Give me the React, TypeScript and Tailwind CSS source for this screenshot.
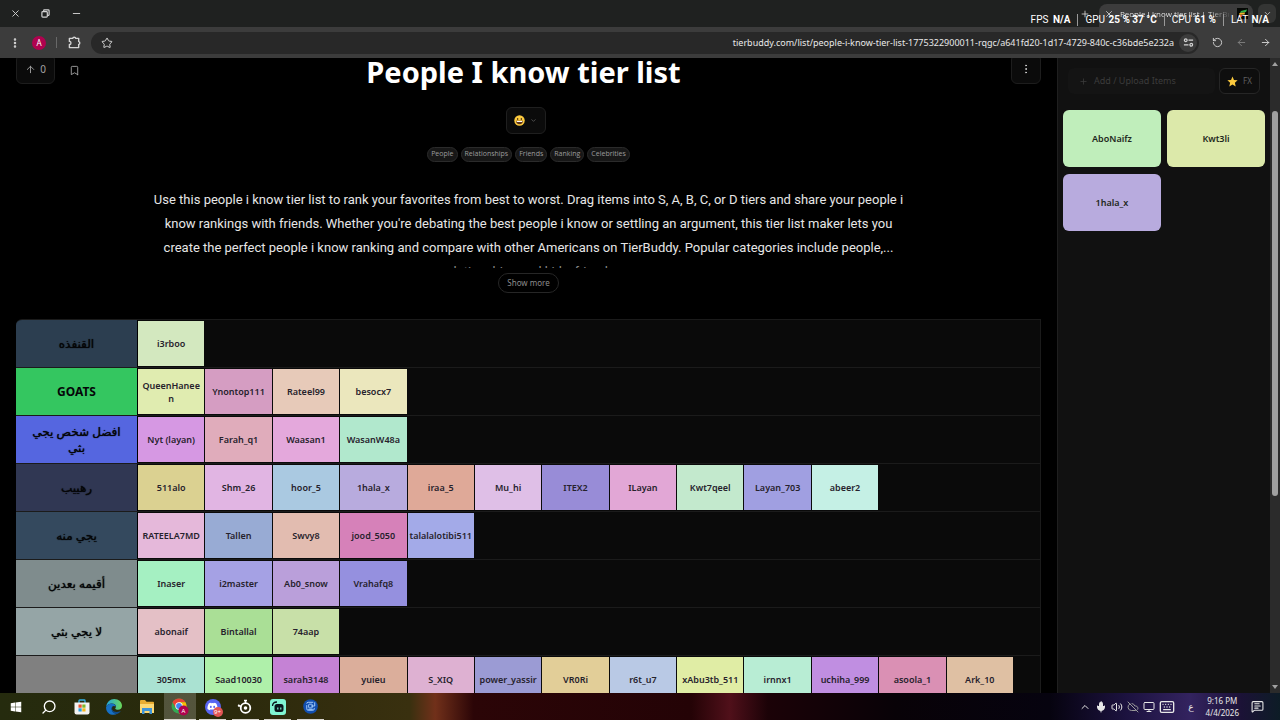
import React from "react";
import {
  ArrowLeft,
  ArrowRight,
  ArrowUp,
  Bookmark,
  ChevronDown,
  ChevronUp,
  CloudOff,
  EllipsisVertical,
  Keyboard,
  MessageSquareText,
  Mic,
  Minus,
  Monitor,
  Plus,
  RotateCcw,
  Search,
  Star,
  Volume2,
  X,
} from "lucide-react";
import { FaDiscord, FaWindows } from "react-icons/fa";

type Item = [name: string, color: string];
type Tier = { label: string; color: string; items: Item[] };

const tiers: Tier[] = [
  { label: "القنفذه", color: "bg-[#2c3e50]", items: [["i3rboo", "bg-[#d3e8bf]"]] },
  {
    label: "GOATS",
    color: "bg-[#34c660]",
    items: [
      ["QueenHanee\nn", "bg-[#e0ecb0]"],
      ["Ynontop111", "bg-[#d59dc2]"],
      ["Rateel99", "bg-[#e7cab9]"],
      ["besocx7", "bg-[#ebe7bd]"],
    ],
  },
  {
    label: "افضل شخص يجي بثي",
    color: "bg-[#5566e0]",
    items: [
      ["Nyt (layan)", "bg-[#d698e3]"],
      ["Farah_q1", "bg-[#e0acbb]"],
      ["Waasan1", "bg-[#e4a8dc]"],
      ["WasanW48a", "bg-[#b1e8cd]"],
    ],
  },
  {
    label: "رهييب",
    color: "bg-[#303753]",
    items: [
      ["511alo", "bg-[#dbd191]"],
      ["Shm_26", "bg-[#e1b5e3]"],
      ["hoor_5", "bg-[#aac9e1]"],
      ["1hala_x", "bg-[#b8abde]"],
      ["iraa_5", "bg-[#dfa998]"],
      ["Mu_hi", "bg-[#dfbfe7]"],
      ["ITEX2", "bg-[#988cd7]"],
      ["ILayan", "bg-[#e2a7d6]"],
      ["Kwt7qeel", "bg-[#c3e9cd]"],
      ["Layan_703", "bg-[#a09fe1]"],
      ["abeer2", "bg-[#c5f0e5]"],
    ],
  },
  {
    label: "يجي منه",
    color: "bg-[#34495e]",
    items: [
      ["RATEELA7MD", "bg-[#e5b8da]"],
      ["Tallen", "bg-[#98abd4]"],
      ["Swvy8", "bg-[#e2bcb0]"],
      ["jood_5050", "bg-[#d681b9]"],
      ["talalalotibi511", "bg-[#a3aae8]"],
    ],
  },
  {
    label: "أقيمه بعدين",
    color: "bg-[#7f8c8d]",
    items: [
      ["Inaser", "bg-[#a5f0c2]"],
      ["i2master", "bg-[#a5a1e4]"],
      ["Ab0_snow", "bg-[#ba9fda]"],
      ["Vrahafq8", "bg-[#9590df]"],
    ],
  },
  {
    label: "لا يجي بثي",
    color: "bg-[#95a5a6]",
    items: [
      ["abonaif", "bg-[#e4c0c6]"],
      ["Bintallal", "bg-[#aadf96]"],
      ["74aap", "bg-[#c8e0a8]"],
    ],
  },
  {
    label: "",
    color: "bg-[#808080]",
    items: [
      ["305mx", "bg-[#aae2d2]"],
      ["Saad10030", "bg-[#aff0aa]"],
      ["sarah3148", "bg-[#c582d5]"],
      ["yuieu", "bg-[#dbae9b]"],
      ["S_XIQ", "bg-[#deb1d2]"],
      ["power_yassir", "bg-[#9b9bd4]"],
      ["VR0Ri", "bg-[#e2ce98]"],
      ["r6t_u7", "bg-[#b9c9e5]"],
      ["xAbu3tb_511", "bg-[#e0eda5]"],
      ["irnnx1", "bg-[#b8edd4]"],
      ["uchiha_999", "bg-[#c08ee1]"],
      ["asoola_1", "bg-[#da90b4]"],
      ["Ark_10", "bg-[#dfc0a3]"],
    ],
  },
];

const tags = ["People", "Relationships", "Friends", "Ranking", "Celebrities"];

const pool: Item[] = [
  ["AboNaifz", "bg-[#c0eebb]"],
  ["Kwt3li", "bg-[#dce9aa]"],
  ["1hala_x", "bg-[#b8abde]"],
];

function RestoreIcon() {
  return (
    <svg viewBox="0 0 10 10" className="size-[9px]" fill="none" stroke="currentColor" strokeWidth="1.3">
      <rect x="1" y="3" width="6" height="6" rx="1" />
      <path d="M3 3V1.6q0-.6.6-.6H8q1 0 1 1v4.400q0 .6-.6.6H7" />
    </svg>
  );
}

function PuzzleIcon() {
  return (
    <svg viewBox="0 0 14 14" className="size-[13px]" fill="none" stroke="currentColor" strokeWidth="1.5" strokeLinejoin="round">
      <path d="M1.500 2.500H5.200a1.500 1.200 0 0 1 3 0H11.500V6a1.200 1.500 0 0 1 0 3v3.500H1.500V9.200a1.700 1.700 0 0 0 0-3.400z" />
    </svg>
  );
}

function TuneIcon() {
  return (
    <svg viewBox="0 0 12 12" className="size-[11px]" fill="none" stroke="currentColor" strokeWidth="1.3">
      <circle cx="3" cy="3.500" r="1.500" />
      <path d="M6 3.500h5M1 8.500h5" />
      <circle cx="9" cy="8.500" r="1.500" />
    </svg>
  );
}

function TitleBar() {
  return (
    <div className="relative flex h-[27px] shrink-0 items-center justify-between bg-[#1f2120] text-[#d5d5d5]">
      <div className="flex">
        <button aria-label="Close window" className="flex w-[30px] justify-center">
          <X className="size-[11px]" />
        </button>
        <button aria-label="Restore window" className="flex w-[30px] items-center justify-center">
          <RestoreIcon />
        </button>
        <button aria-label="Minimize window" className="flex w-8 justify-center">
          <Minus className="size-[11px]" />
        </button>
      </div>
      <div className="flex h-full items-stretch pt-1 pr-1">
        <button aria-label="New tab" className="flex w-7 items-center justify-center pb-1">
          <Plus className="size-[10px]" />
        </button>
        <div className="flex w-[154px] items-center rounded-t-lg bg-[#3c3c3c] px-[5px] pb-1">
          <button aria-label="Close tab" className="mr-[6px]">
            <X className="size-[10px]" />
          </button>
          <span className="min-w-0 flex-1 overflow-hidden bg-linear-to-r from-[#f0f0f0] from-80% to-[#555] bg-clip-text font-['Open_Sans',sans-serif] text-[8px] whitespace-nowrap text-transparent">
            People I know tier list | TierBuddy
          </span>
          <svg viewBox="0 0 11 11" className="ml-2 size-[11px]">
            <path fill="#050805" d="M0 0h11v11H0z" />
            <path fill="#31b24a" d="M4 3 10 1.500 9 4 3 5z" />
            <path fill="#f0b429" d="M2.500 5 8 4.500 7.500 6.500 2 6.800z" />
            <path fill="#e5533c" d="M2 7h3.500L5 8.800H1.500z" />
          </svg>
        </div>
        <button aria-label="Search tabs" className="mb-1 ml-[5px] flex w-[18px] items-center justify-center rounded-md bg-[#343534]">
          <ChevronDown className="size-[9px]" />
        </button>
      </div>
      <div className="absolute top-[13px] right-[11px] flex items-center gap-[7px] font-['Roboto',sans-serif] text-[10px] leading-[14px] whitespace-nowrap text-white">
        <span>FPS <b className="ml-[2px]">N/A</b></span>
        <span className="h-3 w-px bg-[#999]" />
        <span>GPU <b className="ml-px">25 % 37 °C</b></span>
        <span className="h-3 w-px bg-[#999]" />
        <span>CPU <b className="ml-px">61 %</b></span>
        <span className="h-3 w-px bg-[#999]" />
        <span>LAT <b className="ml-px">N/A</b></span>
      </div>
    </div>
  );
}

function AddressBar() {
  return (
    <div className="flex h-[31px] shrink-0 items-center bg-[#3c3c3c] text-[#d5d5d5]">
      <button aria-label="Menu" className="flex w-[30px] justify-center">
        <EllipsisVertical className="size-3" strokeWidth={3} />
      </button>
      <button aria-label="Profile" className="ml-[2px] flex size-[14px] items-center justify-center rounded-full bg-[#b0024f] text-[8px] text-white">
        A
      </button>
      <span className="ml-[10px] h-[11px] w-px bg-[#686868]" />
      <button aria-label="Extensions" className="ml-[10px] flex w-[15px] justify-center">
        <PuzzleIcon />
      </button>
      <div className="ml-[9px] flex h-[22px] flex-1 items-center rounded-full bg-[#282828] pr-[2px] pl-[10px]">
        <button aria-label="Bookmark this tab">
          <Star className="size-3" />
        </button>
        <input
          aria-label="Address"
          readOnly
          className="min-w-0 flex-1 bg-transparent pr-[5px] text-right text-[9px] text-[#e8e8e8] outline-none"
          value="tierbuddy.com/list/people-i-know-tier-list-1775322900011-rqgc/a641fd20-1d17-4729-840c-c36bde5e232a"
        />
        <button aria-label="Site information" className="flex size-[18px] items-center justify-center rounded-full bg-[#3c3c3c]">
          <TuneIcon />
        </button>
      </div>
      <div className="flex pr-[3px] pl-[6px]">
        <button aria-label="Reload" className="flex w-6 justify-center">
          <RotateCcw className="size-[11px]" />
        </button>
        <button aria-label="Forward" className="flex w-6 justify-center text-[#808080]">
          <ArrowLeft className="size-[11px]" />
        </button>
        <button aria-label="Back" className="flex w-6 justify-center">
          <ArrowRight className="size-[11px]" />
        </button>
      </div>
    </div>
  );
}

function Smiley() {
  return (
    <svg viewBox="0 0 12 12" className="size-[11px]">
      <circle cx="6" cy="6" r="5.700" fill="#fcca3e" />
      <ellipse cx="4" cy="4.300" rx=".8" ry="1.100" fill="#47301b" />
      <ellipse cx="8" cy="4.300" rx=".8" ry="1.100" fill="#47301b" />
      <path d="M2.200 6.300h7.600a3.800 3.800 0 0 1-7.600 0z" fill="#5a321a" />
      <path d="M2.800 6.500h6.400l-.3 1.100H3.100z" fill="#fff" />
    </svg>
  );
}

function TierRow({ tier }: { tier: Tier }) {
  const latin = tier.label === "GOATS";
  return (
    <div className="flex h-12 border-b border-[#1b1b1b]">
      <div
        dir="auto"
        className={`flex w-[121px] shrink-0 items-center justify-center px-2 text-center text-[12px] leading-4 text-[#050608] ${latin ? "font-bold" : "font-normal text-shadow-[0_0_1px_#000]"} ${tier.color}`}
      >
        {tier.label}
      </div>
      <div className="min-w-0 flex-1 border-l border-black py-px">
        <div className="grid h-[45px] w-[875px] grid-cols-[repeat(13,minmax(0,1fr))] gap-px">
          {tier.items.map(([name, color]) => (
            <div
              key={name}
              className={`flex items-center justify-center text-center text-[9px] leading-[13px] font-semibold whitespace-pre text-[#26222c] ${color}`}
            >
              {name}
            </div>
          ))}
        </div>
      </div>
    </div>
  );
}

function Main() {
  return (
    <main className="min-w-0 flex-1 overflow-hidden bg-black px-4">
      <div className="-mt-1 grid grid-cols-[1fr_auto_1fr]">
        <div className="flex items-start gap-[14px] text-[#a3a3a3]">
          <button aria-label="Upvote" className="flex h-[30px] w-[39px] items-center justify-center gap-1 rounded-md border border-[#1d1d1d] bg-[#0b0b0b] text-[10px]">
            <ArrowUp className="size-[11px]" />
            <span>0</span>
          </button>
          <button aria-label="Save" className="flex h-8 items-center">
            <Bookmark className="size-[11px]" />
          </button>
        </div>
        <h1 className="pr-[10px] text-[29px] leading-9 font-bold text-white">People I know tier list</h1>
        <button aria-label="More" className="flex h-[30px] w-[30px] items-center justify-center justify-self-end rounded-md border border-[#1d1d1d] bg-[#0b0b0b] text-[#d0d0d0]">
          <EllipsisVertical className="size-3" />
        </button>
      </div>
      <div className="flex flex-col items-center">
        <button aria-label="React" className="mt-[17px] mr-[6px] flex h-[27px] w-10 items-center justify-center gap-[5px] rounded-md border border-[#1f1f1f] bg-[#0b0b0b] text-[#777]">
          <Smiley />
          <ChevronDown className="size-[7px]" />
        </button>
        <div className="mt-[13px] flex gap-[3px]">
          {tags.map((t) => (
            <a key={t} href="#" className="flex h-[15px] items-center rounded-full border border-[#2b2b2b] bg-[#171717] px-[3px] font-['Open_Sans',sans-serif] text-[7px] text-[#9c9c9c]">
              {t}
            </a>
          ))}
        </div>
        <p className="mt-[26px] h-20 overflow-hidden text-center font-['Roboto',sans-serif] text-[13px] leading-6 text-[#e6e6e6]">
          <span className="block">Use this people i know tier list to rank your favorites from best to worst. Drag items into S, A, B, C, or D tiers and share your people i</span>
          <span className="block">know rankings with friends. Whether you're debating the best people i know or settling an argument, this tier list maker lets you</span>
          <span className="block">create the perfect people i know ranking and compare with other Americans on TierBuddy. Popular categories include people,...</span>
          <span className="block text-[#8c8c8c]">relationships and kids, friends</span>
        </p>
        <button className="mt-[5px] h-5 rounded-full border border-[#262626] px-2 text-[8px] text-[#8c8c8c]">Show more</button>
      </div>
      <div className="mt-[26px] overflow-hidden rounded-tl-md border-y border-r border-[#1b1b1b] bg-[#0a0a0a]">
        {tiers.map((t, i) => (
          <TierRow key={i} tier={t} />
        ))}
      </div>
    </main>
  );
}

function Sidebar() {
  return (
    <aside className="w-[213px] shrink-0 border-l border-[#1f1f1f] bg-[#111111] px-[5px] pt-[10px]">
      <div className="flex gap-1 px-[5px]">
        <button className="flex h-[26px] flex-1 items-center gap-[6px] rounded-md bg-[#141414] px-[11px] text-[9px] text-[#3c3c3c]">
          <Plus className="size-[9px]" />
          Add / Upload Items
        </button>
        <button className="flex h-[26px] w-[41px] items-center justify-center gap-[5px] rounded-md border border-[#262626] bg-[#0e0e0e] text-[8px] text-[#606060]">
          <svg viewBox="0 0 12 12" className="size-[11px]">
            <path fill="#fcca3e" d="m6 .6 1.600 3.700 4 .4-3 2.700.9 4L6 9.300l-3.500 2.100.9-4-3-2.700 4-.4z" />
          </svg>
          FX
        </button>
      </div>
      <div className="mt-4 grid grid-cols-2 gap-x-[6px] gap-y-[7px]">
        {pool.map(([name, color]) => (
          <div key={name} className={`flex h-[57px] items-center justify-center rounded-md text-[9px] font-semibold text-[#1e2820] ${color}`}>
            {name}
          </div>
        ))}
      </div>
    </aside>
  );
}

function Scrollbar() {
  return (
    <div className="flex w-[10px] shrink-0 flex-col items-center bg-[#2b2b2b] py-1">
      <svg viewBox="0 0 6 4" className="h-1 w-[6px]">
        <path fill="#a0a0a0" d="M3 0l3 4H0z" />
      </svg>
      <div className="flex w-full flex-1 flex-col items-center pt-[45px]">
        <div className="h-[67%] w-[6px] rounded-full bg-[#9f9f9f]" />
      </div>
      <svg viewBox="0 0 6 4" className="h-1 w-[6px]">
        <path fill="#a0a0a0" d="M3 4L0 0h6z" />
      </svg>
    </div>
  );
}

function StoreIcon() {
  return (
    <svg viewBox="0 0 16 16" className="size-4">
      <path d="M5 4V1.700q0-.7.700-.7h4.600q.7 0 .7.700V4" fill="none" stroke="#35b3e8" strokeWidth="1.300" />
      <path d="M.5 3.500h15v10q0 2-2 2h-11q-2 0-2-2z" fill="#f2f2f2" />
      <path fill="#e8512f" d="M4.500 5.500h3.200v3.200H4.500z" />
      <path fill="#7db928" d="M8.300 5.500h3.200v3.200H8.300z" />
      <path fill="#2a9fe0" d="M4.500 9.300h3.200v3.200H4.500z" />
      <path fill="#f6b71c" d="M8.300 9.300h3.200v3.200H8.300z" />
    </svg>
  );
}

function EdgeIcon() {
  return (
    <svg viewBox="0 0 16 16" className="size-4">
      <defs>
        <linearGradient id="edge-top" x1="0" x2="1">
          <stop stopColor="#21a5df" />
          <stop offset="1" stopColor="#6bd858" />
        </linearGradient>
      </defs>
      <path fill="url(#edge-top)" d="M.2 7.500C.8 3 4.200 0 8.200 0 12.700 0 16 3.200 16 6.800c0 2.400-1.700 4-4 4-1.700 0-2.800-.7-2.800-1.300 0-.4.8-.8.8-2 0-1.700-1.800-3-4.200-3C3.400 4.500 1.300 5.700.2 7.500z" />
      <path fill="#1670c5" d="M.1 8C.9 5.800 3.200 4.600 5.500 4.600c2.600 0 4.400 1.400 4.400 2.800C6.500 5.700 5 8.500 5.800 10.900c.8 2.600 3.300 4 5.600 3.800C7 17.500-.4 15 .1 8z" />
      <path fill="#104e91" d="M6.800 7.500c-2.300 3.700 1.300 7.200 7.900 4.600-1 1.800-2.500 2.600-3.500 2.800-4 .3-7.400-3.900-4.400-7.400z" />
    </svg>
  );
}

function FolderIcon() {
  return (
    <svg viewBox="0 0 16 14" className="h-[14px] w-4">
      <path fill="#e8ad32" d="M1 1q0-1 1-1h4l1.500 1.700H14q1 0 1 1V13H1z" />
      <path fill="#fcd873" d="M1 4h14v9H1z" />
      <path fill="#3f94d7" d="M3 8h10v6h-2.500v-3h-5v3H3z" />
    </svg>
  );
}

function ChromeIcon() {
  return (
    <svg viewBox="0 0 18 18" className="size-[18px]">
      <circle cx="8" cy="8" r="7.500" fill="#35a853" />
      <path fill="#ea4335" d="M1.500 4.300a7.500 7.500 0 0 1 13 0H8L4.800 9.900z" />
      <path fill="#fbbc05" d="M14.500 4.300A7.500 7.500 0 0 1 7.800 15.500L11.200 9.900 8 4.300z" />
      <circle cx="8" cy="8" r="3.700" fill="#fff" />
      <circle cx="8" cy="8" r="2.900" fill="#4285f4" />
      <circle cx="12.500" cy="12.500" r="5" fill="#b0024f" />
      <text x="12.500" y="14.600" textAnchor="middle" fontSize="6" fill="#fff">A</text>
    </svg>
  );
}

function DiscordIcon() {
  return (
    <span className="relative flex size-4 items-center justify-center rounded-full bg-[#5865f2] text-white">
      <FaDiscord className="size-[11px]" />
      <span className="absolute -right-[2px] -bottom-[2px] flex size-[10px] items-center justify-center rounded-full bg-[#e25555] text-[6px] leading-none">9+</span>
    </span>
  );
}

function GearIcon() {
  return (
    <svg viewBox="0 0 16 16" className="size-4" fill="none" stroke="#fff">
      <circle cx="8.500" cy="9" r="4.800" strokeWidth="1.800" />
      <circle cx="8.500" cy="9" r="1.800" fill="#fff" stroke="none" />
      <path strokeWidth="1.600" d="M1 6.500 4.500 7.500M8.500 4V1.500M7 1.500h3" />
      <circle cx="1.800" cy="6.500" r="1" fill="#fff" stroke="none" />
    </svg>
  );
}

function StreamIcon() {
  return (
    <svg viewBox="0 0 16 16" className="size-4">
      <rect width="16" height="16" rx="3" fill="#80f5d2" />
      <rect x="4.500" y="5" width="9" height="8" rx="2.500" fill="#09161d" />
      <path d="M2.500 7q0-4 4.500-4" fill="none" stroke="#09161d" strokeWidth="1.300" />
      <path d="M7.800 8.500v2M10.800 8.500v2" stroke="#80f5d2" strokeWidth="1.200" />
    </svg>
  );
}

function BlueIcon() {
  return (
    <svg viewBox="0 0 16 16" className="size-[15px]" fill="none" stroke="#a9d1ff" strokeWidth="1">
      <circle cx="8" cy="8" r="7.800" fill="#124fb0" stroke="none" />
      <path d="M4 5q0-1.500 1.500-1.500h5.500M4 6.500v4q0 1.500 1.500 1.500h5q1.500 0 1.500-1.500V9.500M12.500 3.500v4h-4" />
      <rect x="6" y="5.500" width="4" height="4" rx="1" />
      <path d="M5.500 11h5" />
    </svg>
  );
}

const apps: { name: string; icon: React.ReactNode; state: "idle" | "open" | "active" }[] = [
  { name: "Start", icon: <FaWindows className="size-3 text-white" />, state: "idle" },
  { name: "Search", icon: <Search className="size-4 -scale-x-100 text-white" />, state: "idle" },
  { name: "Store", icon: <StoreIcon />, state: "idle" },
  { name: "Edge", icon: <EdgeIcon />, state: "idle" },
  { name: "Files", icon: <FolderIcon />, state: "idle" },
  { name: "Chrome", icon: <ChromeIcon />, state: "active" },
  { name: "Discord", icon: <DiscordIcon />, state: "open" },
  { name: "Engine", icon: <GearIcon />, state: "open" },
  { name: "Stream", icon: <StreamIcon />, state: "open" },
  { name: "Capture", icon: <BlueIcon />, state: "open" },
];

function Taskbar() {
  return (
    <div className="flex h-[27px] shrink-0 items-stretch justify-between bg-[linear-gradient(90deg,#252b0e_0%,#2b2a0c_18%,#332d0e_26%,#39300f_32%,#71301a_34%,#2b0507_37%,#240306_54%,#50101a_57%,#1b0207_60%,#080207_70%,#06030f_82%,#1c123f_88%,#33235f_93%,#1b1236_97%,#0d1c26_100%)]">
      <div className="grid w-[327px] grid-cols-10">
        {apps.map((a) => (
          <button
            key={a.name}
            aria-label={a.name}
            className={`relative flex items-center justify-center ${a.state === "active" ? "bg-white/20" : ""}`}
          >
            {a.icon}
            {a.state !== "idle" && (
              <span className={`absolute bottom-0 h-px bg-[#d8d4cc] ${a.state === "active" ? "w-full" : "w-[27px]"}`} />
            )}
          </button>
        ))}
      </div>
      <div className="flex items-center pr-4 text-[#e8e8e8]">
        <div className="flex items-center gap-1">
          <ChevronUp className="size-3" />
          <Mic className="size-3 fill-current" />
          <Volume2 className="size-3" />
          <CloudOff className="size-3 text-[#9a9a9a]" />
          <Monitor className="size-3" />
          <Keyboard className="size-4" />
        </div>
        <span className="ml-[13px] text-[9px]">ع</span>
        <div className="ml-3 text-center text-[8px] leading-3">
          <div>9:16 PM</div>
          <div>4/4/2026</div>
        </div>
        <MessageSquareText className="ml-3 size-[13px]" />
      </div>
    </div>
  );
}

export default function App() {
  return (
    <div className="flex h-screen flex-col overflow-hidden bg-black font-['Noto_Sans','DejaVu_Sans',sans-serif]">
      <TitleBar />
      <AddressBar />
      <div className="flex min-h-0 flex-1">
        <Main />
        <Sidebar />
        <Scrollbar />
      </div>
      <Taskbar />
    </div>
  );
}
